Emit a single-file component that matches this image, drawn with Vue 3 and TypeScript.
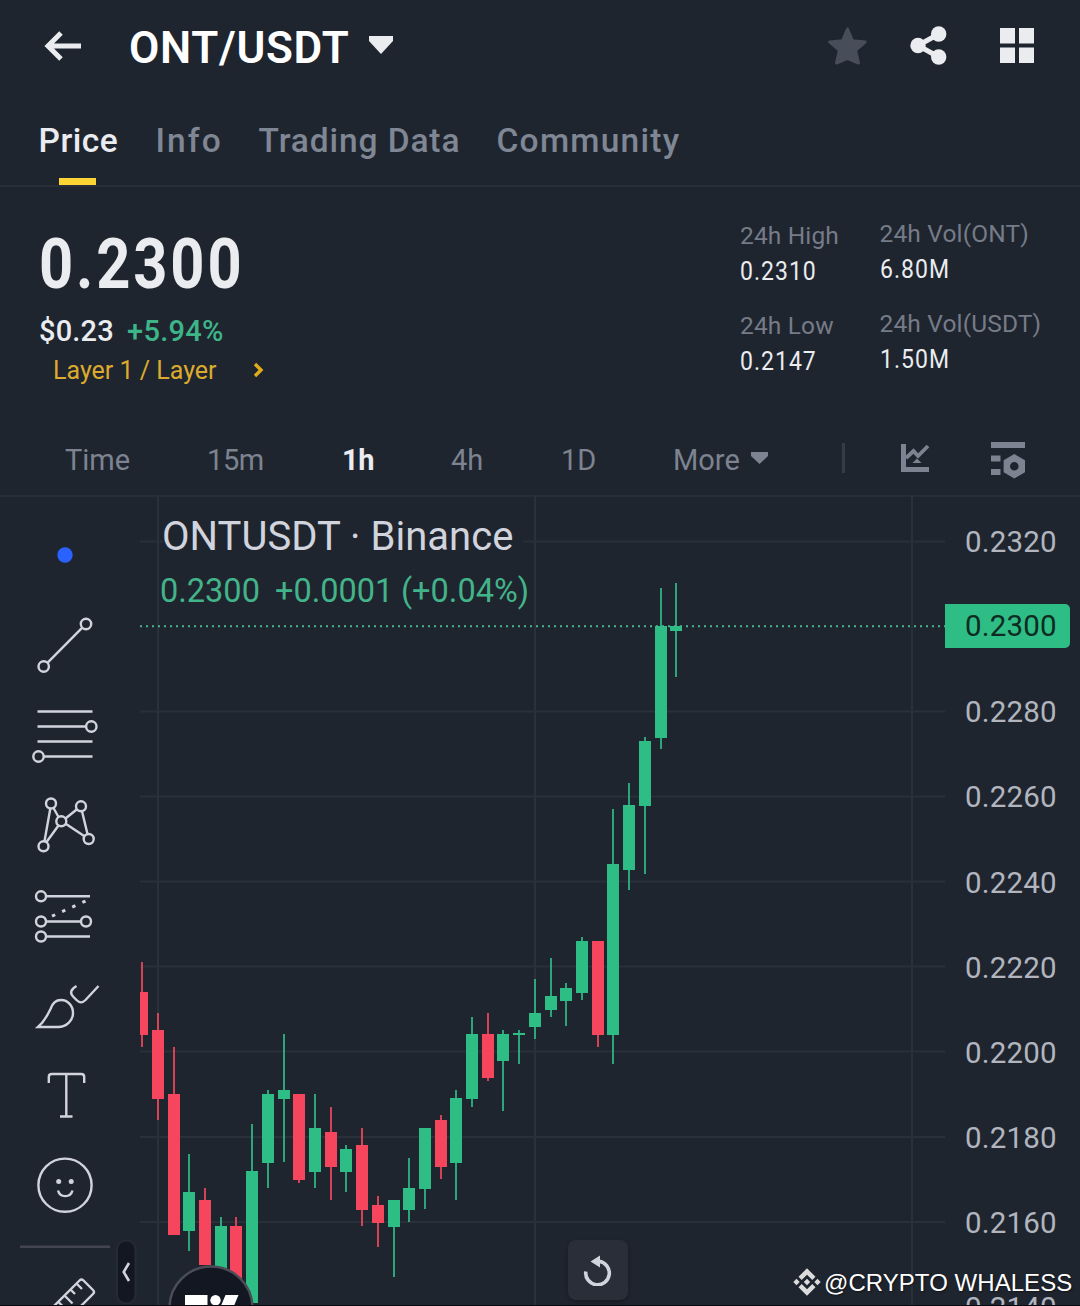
<script setup lang="ts">
interface Candle {
  x: number
  top: number
  bottom: number
  high: number
  low: number
  up: boolean
  width?: number
  wick?: number
}

const tabs = ['Price', 'Info', 'Trading Data', 'Community']
const intervals = ['Time', '15m', '1h', '4h', '1D']
const axis = ['0.2320', '0.2300', '0.2280', '0.2260', '0.2240', '0.2220', '0.2200', '0.2180', '0.2160', '0.2140']
const gridY = [541.5, 711.5, 796.5, 881.5, 966.5, 1051.5, 1137, 1222]
const gridX = [158, 535, 912]

// [left, body top, body bottom, high, low, rising]
const rows: [number, number, number, number, number, number][] = [
  [152, 1030, 1099, 1013, 1120, 0],
  [168, 1094, 1235, 1047, 1235, 0],
  [183, 1192, 1231, 1154, 1251, 1],
  [199, 1200, 1265, 1188, 1265, 0],
  [215, 1226, 1275, 1217, 1275, 1],
  [230, 1226, 1290, 1217, 1290, 0],
  [246, 1171, 1303, 1124, 1303, 1],
  [262, 1094, 1163, 1090, 1188, 1],
  [278, 1090, 1099, 1034, 1162, 1],
  [293, 1094, 1180, 1094, 1183, 0],
  [309, 1128, 1172, 1094, 1188, 1],
  [325, 1132, 1167, 1107, 1200, 0],
  [340, 1149, 1172, 1145, 1192, 1],
  [356, 1145, 1210, 1128, 1226, 0],
  [372, 1205, 1223, 1196, 1247, 0],
  [388, 1200, 1227, 1200, 1277, 1],
  [403, 1188, 1210, 1158, 1222, 1],
  [419, 1128, 1189, 1128, 1209, 1],
  [435, 1120, 1167, 1115, 1179, 0],
  [450, 1098, 1163, 1090, 1200, 1],
  [466, 1034, 1099, 1017, 1107, 1],
  [482, 1034, 1078, 1013, 1081, 0],
  [497, 1034, 1061, 1030, 1111, 1],
  [513, 1033, 1035, 1030, 1064, 1],
  [529, 1013, 1027, 979, 1039, 1],
  [545, 996, 1010, 958, 1017, 1],
  [560, 988, 1001, 983, 1026, 1],
  [576, 941, 993, 937, 1000, 1],
  [592, 941, 1035, 941, 1047, 0],
  [607, 864, 1035, 809, 1064, 1],
  [623, 805, 870, 783, 890, 1],
  [639, 741, 806, 737, 874, 1],
  [655, 626, 738, 588, 749, 1],
  [670, 626, 631, 583, 677, 1],
]

const candles: Candle[] = [
  { x: 140, top: 992, bottom: 1035, high: 962, low: 1047, up: false, width: 8, wick: 141 },
  ...rows.map(([x, top, bottom, high, low, up]) => ({ x, top, bottom, high, low, up: up === 1 })),
]
</script>

<template>
  <div class="screen">
    <header class="header">
      <svg class="back" width="38" height="30" viewBox="0 0 38 30"><path d="M37 15H4M17 2 4 15l13 13" fill="none" stroke="#eaecef" stroke-width="5" /></svg>
      <h1 class="pair">ONT/USDT</h1>
      <svg class="pair-caret" width="24" height="18" viewBox="0 0 24 18"><path d="M0 0h24v5L12 18 0 5z" fill="#eaecef" /></svg>
      <div class="actions">
        <svg class="star" width="39" height="39" viewBox="0 0 39 39"><path d="M19.500 2l5 11.800 12.800 1.100-9.700 8.500 2.900 12.600-11-4.700-11 4.700 2.900-12.600-9.700-8.500 12.800-1.100z" fill="#474d59" stroke="#474d59" stroke-width="3" stroke-linejoin="round" /></svg>
        <svg width="37" height="39" viewBox="0 0 37 39"><g fill="#eaecef"><circle cx="8" cy="19.500" r="7.700" /><circle cx="28.700" cy="8" r="7.700" /><circle cx="28.700" cy="31" r="7.700" /></g><path d="M28.700 8 8 19.500 28.700 31" fill="none" stroke="#eaecef" stroke-width="5" /></svg>
        <svg width="34" height="35" viewBox="0 0 34 35"><path d="M0 0h15v15.500H0zM19 0h15v15.500H19zM0 19.500h15V35H0zM19 19.500h15V35H19z" fill="#eaecef" /></svg>
      </div>
    </header>

    <nav class="tabs">
      <a v-for="(tab, i) in tabs" :key="tab" class="tab" :class="['tab-' + i, { active: i === 0 }]">{{ tab }}</a>
    </nav>

    <section class="summary">
      <div class="quote">
        <div class="last"><span>0.2300</span></div>
        <div class="change"><span class="usd">$0.23</span><span class="pct">+5.94%</span></div>
        <div class="tag">
          <span>Layer 1 / Layer</span>
          <svg width="11" height="16" viewBox="0 0 11 16"><path d="M2 2l6 6-6 6" fill="none" stroke="#e0ac1c" stroke-width="3.400" /></svg>
        </div>
      </div>
      <div class="stats">
        <div class="stat-col">
          <div class="label">24h High</div>
          <div class="value"><span>0.2310</span></div>
          <div class="label second">24h Low</div>
          <div class="value"><span>0.2147</span></div>
        </div>
        <div class="stat-col vol">
          <div class="label">24h Vol(ONT)</div>
          <div class="value"><span>6.80M</span></div>
          <div class="label second">24h Vol(USDT)</div>
          <div class="value"><span>1.50M</span></div>
        </div>
      </div>
    </section>

    <div class="intervals">
      <span v-for="item in intervals" :key="item" :class="{ active: item === '1h' }">{{ item }}</span>
      <span class="more">More<svg width="18" height="12" viewBox="0 0 18 12"><path d="M0 0h17v4L8.500 12 0 4z" fill="#7d8390" /></svg></span>
      <i class="sep"></i>
      <svg class="chart-icon" width="29" height="29" viewBox="0 0 29 29"><g fill="none" stroke="#7d8390"><path d="M2.500 0v25.500H28" stroke-width="5" /><path d="M5 14l7.500-7 4.500 5L27 2" stroke-width="3.800" /></g><path d="M16 14.500l4.500 4.500h-9z" fill="#7d8390" /></svg>
      <svg width="35" height="37" viewBox="0 0 35 37"><g fill="#7d8390"><path d="M0 0h34v6H0zM0 13.500h9.500v6H0zM0 27h9.500v6H0z" /><path fill-rule="evenodd" d="M23.300 12l10.700 6.200v12L23.300 36.500l-10.700-6.300v-12zm0 8a4.300 4.300 0 1 0 0 8.600 4.300 4.300 0 0 0 0-8.600z" /></g></svg>
    </div>

    <main class="chart">
      <aside class="tools">
        <svg viewBox="0 510 140 90"><circle cx="65" cy="555" r="7.700" fill="#2962ff" /></svg>
        <svg viewBox="0 600 140 90"><circle cx="86" cy="624" r="5.200" /><circle cx="43.700" cy="666.500" r="5.200" /><path d="M82.300 627.700 47.400 662.800" /></svg>
        <svg viewBox="0 690 140 90"><path d="M37.500 711.500h55M37.500 726.500h48.500M37.500 741.500h55M44 756.500h48.500" /><circle cx="91.300" cy="726.500" r="5.200" /><circle cx="38.500" cy="756.500" r="5.200" /></svg>
        <svg viewBox="0 780 140 90"><circle cx="51" cy="803.500" r="5" /><circle cx="81" cy="806.300" r="5" /><circle cx="61.300" cy="821.300" r="5" /><circle cx="43.500" cy="846.300" r="5" /><circle cx="88.700" cy="839" r="5" /><path d="M50.300 808.500 44.500 841.300M53.500 808l5 9M58.500 825.500l-12 16.500M65.500 818.500l11.200-9M65.700 823.800l18.800 12.500M82 811.300l5.500 22.700" /></svg>
        <svg viewBox="0 870 140 90"><circle cx="41" cy="896.300" r="5" /><circle cx="41" cy="921.500" r="5" /><circle cx="86" cy="921.500" r="5" /><circle cx="41" cy="936.500" r="5" /><path d="M46 896.300h44M46 921.500h35M46 936.500h44" /><path d="M52 916.200l34-15.400" stroke-dasharray="3.500 7.600" stroke-width="3" /></svg>
        <svg viewBox="0 960 140 90"><path d="M38 1027c7-6 9.500-12 12.500-18 2-6 5.500-9 10.500-9 7 0 12 6 12 13s-6 14-15 14z" stroke-linejoin="miter" /><path d="M76.500 986c-6 3.500-7 7-3 11l3 3c3.500 3.500 6 3 9 0L98.500 986" /></svg>
        <svg viewBox="0 1050 140 90"><path d="M48.800 1083v-6q0-3 3-3h29.400q3 0 3 3v6M66.300 1074v42.500M60 1116.500h12.500" /></svg>
        <svg viewBox="0 1140 140 90"><circle cx="65" cy="1185.200" r="26.600" /><path d="M58 1190.500c2 7.500 12.500 7.500 14.500 0" /><g fill="#d1d4dc" stroke="none"><circle cx="58.700" cy="1181.500" r="2.500" /><circle cx="71.200" cy="1181.500" r="2.500" /></g></svg>
        <svg viewBox="0 1230 140 76" class="last-tool"><path d="M20 1246.700h90" stroke="#434651" stroke-width="2.600" /><path d="M50 1310 79.500 1280.500q2-2 4 0l9.500 9.500q2 2 0 4L77 1310M77 1284l5 5M71 1290l4 4M65 1296l7.500 7.500M58.500 1302l4 4" /><rect x="117" y="1240.500" width="18.500" height="63" rx="9" fill="#131722" stroke="#262a35" stroke-width="2" /><path d="M129 1263l-5.300 9 5.300 9" stroke-width="2.600" /></svg>
      </aside>

      <div class="plot">
        <svg width="805" height="810" viewBox="140 496 805 810">
          <path v-for="x in gridX" :key="'x' + x" :d="`M${x} 496V1306`" stroke="#2b313b" stroke-width="2" />
          <path v-for="y in gridY" :key="'y' + y" :d="`M140 ${y}H945`" stroke="#2a303a" stroke-width="2" />
          <rect x="163" y="525" width="360" height="30" fill="#1f252f" />
          <g v-for="c in candles" :key="c.x" :fill="c.up ? '#2ebd85' : '#f6465d'">
            <rect :x="c.wick ?? c.x + 5" :y="c.high" width="2" :height="c.low - c.high" opacity=".85" />
            <rect :x="c.x" :y="c.top" :width="c.width ?? 12" :height="c.bottom - c.top" />
          </g>
          <path d="M140 626.300H945" stroke="#4bb590" stroke-width="2" stroke-dasharray="2 4" />
          <circle cx="211" cy="1308" r="41.500" fill="#131722" stroke="#4a4d58" stroke-width="2.500" />
          <path d="M185 1295h22.500v12H185zM225.500 1295h13l-5 12h-13z" fill="#fff" />
          <circle cx="215.500" cy="1300.300" r="5.200" fill="#fff" />
        </svg>
        <div class="legend">
          <div class="symbol">ONTUSDT · Binance</div>
          <div class="ohlc"><span>0.2300</span><span>+0.0001</span><span>(+0.04%)</span></div>
        </div>
        <button class="reset">
          <svg width="32" height="32" viewBox="582 1254 32 32"><path d="M585.800 1271.500a11.800 11.800 0 1 0 13.200-10.200" fill="none" stroke="#d1d4dc" stroke-width="3.600" /><path d="M590.500 1261.500l9.500-6v12z" fill="#d1d4dc" /></svg>
        </button>
      </div>

      <div class="axis">
        <div v-for="p in axis" :key="p" class="tick"><span :class="{ current: p === '0.2300' }">{{ p }}</span></div>
      </div>
    </main>

    <div class="watermark">
      <svg width="28" height="28" viewBox="-14 -14 28 28"><g fill="#dcdcdc"><path d="M0-13.700 8.500-5.200 5.300-2 0-7.300-5.300-2-8.500-5.200zM0 13.700 8.500 5.200 5.300 2 0 7.300-5.300 2-8.500 5.200zM0-3.200 3.200 0 0 3.200-3.200 0zM-10.500-3.200-7.300 0-10.500 3.200-13.700 0zM10.500-3.200 13.700 0 10.500 3.200 7.300 0z" /></g></svg>
      <span>@CRYPTO WHALESS</span>
    </div>
    <div class="bottom-edge"></div>
  </div>
</template>

<style>
body { margin: 0; background: #1f252f; }
</style>

<style scoped>
.screen {
  position: relative;
  width: 1080px;
  height: 1306px;
  overflow: hidden;
  background: #1f252f;
  color: #eaecef;
  font-family: Roboto, "Liberation Sans", sans-serif;
  white-space: nowrap;
}
svg { display: block; flex: none; }

.header {
  display: flex;
  align-items: center;
  box-sizing: border-box;
  height: 93px;
  padding: 0 46px 0 44px;
}
.back { margin-top: -2px; }
.pair {
  margin: 2px 0 0 47px;
  width: 222px;
  font-size: 44px;
  font-weight: 600;
  letter-spacing: 0.700px;
  color: #fff;
}
.pair-caret { margin: -3px 0 0 18px; }
.actions { display: flex; align-items: center; margin: -2px 0 0 auto; }
.actions svg:nth-child(2) { margin: 0 53px 0 43px; }
.star { margin-top: 2px; }

.tabs {
  display: grid;
  grid-template-columns: 117px 103px 238px auto;
  box-sizing: border-box;
  height: 94px;
  padding-left: 38.500px;
  border-bottom: 2px solid #282e38;
  font-size: 33.500px;
  font-weight: 500;
  line-height: 95px;
  color: #7f8694;
}
.tab { position: relative; letter-spacing: 0.900px; }
.tab-0 { letter-spacing: 0.500px; }
.tab-1 { letter-spacing: 2.100px; }
.tab-3 { letter-spacing: 1.250px; }
.tab.active { color: #eaecef; }
.tab.active::after {
  content: "";
  position: absolute;
  left: 20.500px;
  top: 85px;
  width: 37px;
  height: 7px;
  background: #fcd535;
}

.summary {
  display: flex;
  justify-content: space-between;
  height: 235px;
}
.quote { padding: 36px 0 0 39px; }
.last { height: 81px; line-height: 82px; font-size: 71px; font-weight: 700; }
.last span {
  display: inline-block;
  transform: scaleX(0.840);
  transform-origin: left;
  letter-spacing: 3.400px;
}
.change {
  display: flex;
  gap: 13px;
  height: 54px;
  line-height: 54px;
  font-size: 29px;
  font-weight: 500;
}
.usd { width: 75px; letter-spacing: 0.200px; }
.pct { color: #3eb489; letter-spacing: 0.300px; }
.tag {
  display: flex;
  align-items: center;
  height: 24px;
  padding-left: 14px;
  font-size: 25px;
  color: #dcab2e;
}
.tag span { width: 200px; }
.stats { display: flex; width: 340px; }
.stat-col { width: 139.500px; padding-top: 31px; font-size: 25px; line-height: 35px; }
.stat-col.vol { padding-top: 29px; }
.label { font-size: 24.500px; color: #757b87; letter-spacing: 0.150px; }
.second { margin-top: 20px; }
.value span {
  position: relative;
  top: 1px;
  display: inline-block;
  transform: scaleX(0.920);
  transform-origin: left;
  letter-spacing: 1.100px;
}

.intervals {
  display: grid;
  grid-template-columns: 143px 134px 109px 110px 112px 169px 59px 90px auto;
  align-items: center;
  box-sizing: border-box;
  height: 75px;
  padding: 3px 0 0 65px;
  border-bottom: 2px solid #272d37;
  font-size: 29px;
  color: #7d8390;
}
.intervals > span:nth-child(2) { margin-left: -1px; letter-spacing: -0.400px; }
.intervals .active { font-weight: 700; color: #eaecef; letter-spacing: -0.500px; }
.more { display: flex; align-items: center; gap: 11px; }
.more svg { margin-top: -5px; }
.sep { width: 3px; height: 30px; margin-top: -4px; background: #363c47; }
.chart-icon { margin-top: -4px; }

.chart { display: flex; height: 810px; margin-top: -1px; }
.tools { width: 140px; padding-top: 14px; box-sizing: border-box; }
.tools svg {
  width: 140px;
  height: 90px;
  fill: none;
  stroke: #d1d4dc;
  stroke-width: 2.400px;
  overflow: visible;
}
.tools circle[fill] { stroke: none; }
.tools .last-tool { height: 76px; }
.plot { position: relative; width: 805px; }
.legend { position: absolute; left: 21px; top: 17px; }
.symbol { height: 48px; margin-left: 1px; line-height: 48px; font-size: 40px; color: #d1d4dc; letter-spacing: 0.030px; }
.ohlc { display: flex; height: 60px; line-height: 60px; font-size: 32.500px; color: #43b489; }
.ohlc span:nth-child(1) { width: 115px; margin-left: -1px; }
.ohlc span:nth-child(2) { width: 126px; }
.reset {
  position: absolute;
  left: 428px;
  top: 744px;
  display: flex;
  align-items: center;
  justify-content: center;
  width: 60px;
  height: 60px;
  padding: 0;
  border: 0;
  border-radius: 8px;
  background: #2a2e39;
  box-shadow: 0 2px 4px rgba(0, 0, 0, 0.300);
}
.axis { width: 135px; padding-top: 3.500px; }
.tick {
  display: flex;
  align-items: center;
  height: 85.150px;
  font-size: 29.500px;
  color: #b2b5be;
}
.tick span {
  box-sizing: border-box;
  width: 125px;
  height: 44px;
  padding-left: 20px;
  line-height: 45px;
  letter-spacing: 0.200px;
}
.tick .current { margin-top: -2px; border-radius: 0 5px 5px 0; background: #2ebd85; color: #0d2b22; }

.watermark {
  position: absolute;
  left: 793px;
  top: 1268px;
  display: flex;
  align-items: center;
  gap: 3px;
  height: 28px;
  font-family: "Liberation Sans", Arial, sans-serif;
  font-size: 24px;
  line-height: 30px;
  letter-spacing: 0.050px;
  color: #fff;
  text-shadow: 1px 1px 2px rgba(0, 0, 0, 0.500);
}
.watermark span { padding-top: 2px; }
.bottom-edge { position: absolute; left: 0; right: 0; bottom: 0; height: 1px; background: #0b0910; }
</style>
